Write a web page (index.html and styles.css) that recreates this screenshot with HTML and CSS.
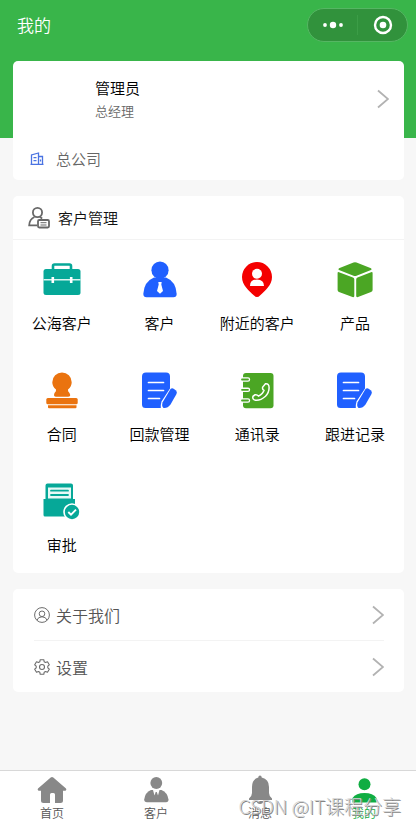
FILE: index.html
```html
<!DOCTYPE html>
<html lang="zh-CN">
<head>
<meta charset="utf-8">
<meta name="viewport" content="width=device-width, initial-scale=1">
<title>我的</title>
<link rel="stylesheet" href="styles.css">
</head>
<body>
<svg class="defs" aria-hidden="true">
  <symbol id="chevron" viewBox="0 0 12 20"><path d="M1 1.500L11 10L1 18.500" fill="none" stroke="#b2b2b2" stroke-width="1.800"/></symbol>
  <symbol id="note" viewBox="0 0 40 40">
    <path d="M6 1.500H26Q30 1.500 30 5.500V17.500L21.500 30.500Q20.500 34 20.800 37H5.500Q2 37 2 33.500V5.500Q2 1.500 6 1.500Z" fill="#2060ff"/>
    <path d="M8.500 11.500H23.500M8.500 19.500H23.500M8.500 27.500H19.500" stroke="#fff" stroke-width="1.700" stroke-linecap="round"/>
    <path d="M30.500 18Q32 16.500 34 18L36 19.500Q37.500 21 36.500 23L30.500 33.500Q27.500 37.500 23.500 37Q21.500 35.500 22.500 31.500Z" fill="#2060ff"/>
  </symbol>
</svg>
<div class="page">
  <header class="topbar">
    <h1>我的</h1>
    <div class="capsule">
      <button type="button" aria-label="更多"><svg width="22" height="8" viewBox="0 0 22 8" fill="#fff"><circle cx="3" cy="4" r="1.900"/><circle cx="11" cy="4" r="3.200"/><circle cx="19" cy="4" r="1.900"/></svg></button>
      <button type="button" aria-label="关闭"><svg width="20" height="20" viewBox="0 0 20 20"><circle cx="10" cy="10" r="8" fill="none" stroke="#fff" stroke-width="2.400"/><circle cx="10" cy="10" r="3.300" fill="#fff"/></svg></button>
    </div>
  </header>

  <main>
    <section class="card profile">
      <a href="#profile" class="person">
        <span class="who"><strong>管理员</strong><small>总经理</small></span>
        <svg class="chevron"><use href="#chevron"/></svg>
      </a>
      <p class="company">
        <svg width="14" height="14" viewBox="0 0 14 14" fill="none" stroke="#4a73e2" stroke-width="1.300"><path d="M1.500 12V3L8.500 1V12M8.500 4.500H12.500V12M0.500 12.300H13.500M3.500 5.700H6.500M3.500 8.700H6.500M10.500 7.500V9.500"/></svg>
        <span>总公司</span>
      </p>
    </section>

    <section class="card">
      <h2>
        <svg width="22" height="22" viewBox="0 0 22 22" fill="none" stroke="#686868" stroke-width="1.800"><circle cx="9.500" cy="5.500" r="4.600"/><path d="M6.500 10Q1.500 12 1.200 18.300H9M12 10L14.200 11.500"/><rect x="10" y="13" width="11" height="7.500" rx="1.200"/><path d="M12.500 15.700H18.500M12.500 18H18.500" stroke-width="1"/></svg>
        客户管理
      </h2>
      <nav class="grid" aria-label="客户管理">
        <a href="#sea"><svg viewBox="0 0 40 40"><path d="M11 10V6Q11 4.500 12.500 4.500H27.500Q29 4.500 29 6V10" fill="none" stroke="#06a898" stroke-width="2.600"/><rect x="1.500" y="9" width="37" height="26" rx="2.500" fill="#06a898"/><path d="M1.500 19.700H38.500" stroke="#d9f5f0" stroke-width="1.400"/><path d="M10.800 17V23M29.200 17V23" stroke="#fff" stroke-width="2.600"/></svg>公海客户</a>
        <a href="#customers"><svg viewBox="0 0 40 40" fill="#2060ff"><circle cx="20" cy="10.200" r="8.600"/><path d="M14 17.500H26Q36 21.500 36.700 34Q36.500 37.200 33.500 37.200H6.500Q3.500 37.200 3.300 34Q4 21.500 14 17.500Z"/><path d="M18.300 22H21.700L21.300 24.500L23 31L20 33.800L17 31L18.700 24.500Z" fill="#fff"/></svg>客户</a>
        <a href="#nearby"><svg viewBox="0 0 40 40"><path d="M20 2A15 15 0 0 0 5 17C5 25 12 31 17 35.500Q20 38.500 23 35.500C28 31 35 25 35 17A15 15 0 0 0 20 2Z" fill="#f40000"/><circle cx="20" cy="13.800" r="5" fill="#fff"/><path d="M13 26Q13 19.500 20 19.500Q27 19.500 27 26Z" fill="#fff"/></svg>附近的客户</a>
        <a href="#products"><svg viewBox="0 0 40 40" fill="#4ba624"><path d="M4 8.300L18.500 2.500Q20 1.800 21.500 2.500L36 8.300Q37.300 9.200 36 10L21.500 15.700Q20 16.200 18.500 15.700L4 10Q2.700 9.200 4 8.300Z"/><path d="M4 12.200L18 17.500Q19.300 18 19.300 19.500V36Q19.300 37.600 17.500 37L4 32Q2.600 31.300 2.600 30V13Q2.600 11.600 4 12.200ZM36 12.200L22.500 17.500Q21.200 18 21.200 19.500V36Q21.200 37.600 23 37L36 32Q37.600 31.300 37.600 30V13Q37.600 11.600 36 12.200Z"/></svg>产品</a>
        <a href="#contracts"><svg viewBox="0 0 40 40" fill="#ea730f"><path d="M20 1.500A9.700 9.700 0 0 0 10.300 11.200Q10.300 15.500 14 18.500Q14.500 20 12.500 22Q11 25.800 14 25.800H26Q29.500 25.800 27.500 22Q25.500 20 26 18.500Q29.700 15.500 29.700 11.200A9.700 9.700 0 0 0 20 1.500Z"/><rect x="4.300" y="27" width="31.400" height="6.200" rx="1.500"/><path d="M6 34.200H34.500V36.200Q34.500 37.200 33.500 37.200H7Q6 37.200 6 36.200Z"/></svg>合同</a>
        <a href="#payments"><svg><use href="#note"/></svg>回款管理</a>
        <a href="#contacts"><svg viewBox="0 0 40 40" fill="none" stroke-linecap="round"><rect x="6" y="2" width="30.500" height="35.200" rx="3" fill="#4ba624"/><path d="M5.500 8.500H11M5.500 18.800H11M5.500 29.500H11" stroke="#fff" stroke-width="4.400"/><path d="M5 8.500H11M5 18.800H11M5 29.500H11" stroke="#4ba624" stroke-width="1.800"/><path d="M28.500 12.800Q32 12.300 32.100 16.800Q32 21.800 28.500 25.300Q23.500 29.800 18.500 29.300Q15 28.300 16 25.300L18 23.800Q20 23.300 21.500 25.100Q26 22.800 27 19.300Q25 18.300 25.700 16Z" stroke="#fff" stroke-width="1.500"/></svg>通讯录</a>
        <a href="#followups"><svg><use href="#note"/></svg>跟进记录</a>
        <a href="#approvals"><svg viewBox="0 0 40 40"><path d="M3.500 17V3.500Q3.500 1.500 5.500 1.500H29Q31 1.500 31 3.500V17H33V34.500H3Q1.500 34.500 1.500 33V17Z" fill="#06a898"/><rect x="6" y="5.500" width="23" height="11" fill="#e6f9f6"/><path d="M9 8.700H26M9 13H26" stroke="#06a898" stroke-width="1.800" stroke-linecap="round"/><circle cx="30" cy="30" r="8.800" fill="#fff"/><circle cx="30" cy="30" r="7.200" fill="#06a898"/><path d="M26.300 30L29 32.700L34 27.700" fill="none" stroke="#fff" stroke-width="1.900"/></svg>审批</a>
      </nav>
    </section>

    <nav class="card list" aria-label="其他">
      <a href="#about">
        <svg width="16" height="16" viewBox="0 0 16 16" fill="none" stroke="#6c6c6c"><circle cx="8" cy="8" r="7.400"/><circle cx="8" cy="6.800" r="2.800"/><path d="M3 13.200Q4 9.800 8 9.800Q12 9.800 13 13.200"/></svg>
        <span>关于我们</span><svg class="chevron"><use href="#chevron"/></svg>
      </a>
      <a href="#settings">
        <svg width="16" height="16" viewBox="0 0 16 16" fill="none" stroke="#6c6c6c" stroke-width="1.100" stroke-linejoin="round"><path d="M6.200 0.700H9.800L10.200 2.800L11.500 3.500L13.500 2.800L15.300 5.800L13.800 7.200V8.800L15.300 10.200L13.500 13.200L11.500 12.500L10.200 13.200L9.800 15.300H6.200L5.800 13.200L4.500 12.500L2.500 13.200L0.700 10.200L2.200 8.800V7.200L0.700 5.800L2.500 2.800L4.500 3.500L5.800 2.800Z"/><circle cx="8" cy="8" r="2.500"/></svg>
        <span>设置</span><svg class="chevron"><use href="#chevron"/></svg>
      </a>
    </nav>
  </main>

  <nav class="tabbar" aria-label="主导航">
    <a href="#home"><svg viewBox="0 0 30 30"><path d="M13.700 2.500Q15 1.500 16.300 2.500L29 13.500Q30 15 28.500 15.700H26V25.500Q26 28 23.500 28H18V19.500Q18 18 16.500 18H14.500Q13 18 13 19.500V28H6.500Q4 28 4 25.500V15.700H1.500Q0 15 1 13.500Z"/></svg>首页</a>
    <a href="#customers"><svg viewBox="0 0 30 30"><circle cx="15.300" cy="8" r="5.900"/><path d="M10 15H20.500Q26.500 17.500 27.500 24.500Q27.500 27.300 25 27.300H6Q3.200 27.300 3.200 24.500Q4 17.500 10 15Z"/><path d="M12 15L13.500 20.500L14.700 17H15.800L17 20.500L18.500 15Z" fill="#fff"/></svg>客户</a>
    <a href="#messages"><svg viewBox="0 0 30 30"><path d="M15 0.500Q16.700 0.500 16.700 2.500Q24 4 24 12V18Q24 21 27 23.500V25H4V23.500Q7 21 7 18V12Q7 4 13.300 2.500Q13.300 0.500 15 0.500ZM11.500 26H18.500Q18 29 15 29Q12 29 11.500 26Z"/></svg>消息</a>
    <a href="#me" class="current" aria-current="page"><svg viewBox="0 0 30 30"><circle cx="15.500" cy="9.300" r="6"/><path d="M3.500 27.500V23Q7 18 15.500 18Q24 18 27.500 23V27.500Z"/></svg>我的</a>
    <span class="watermark">CSDN @IT课程分享</span>
  </nav>
</div>
</body>
</html>
```
FILE: styles.css
```css
* { box-sizing: border-box; }

body {
  margin: 0;
  background: #f7f7f7;
  color: #111;
  font-family: "Noto Sans CJK SC", sans-serif;
  font-size: 15px;
  font-weight: 350;
  line-height: 24px;
}

h1, h2, p { margin: 0; font-weight: inherit; }
a { color: inherit; text-decoration: none; }
svg { display: block; flex: none; }
.defs { position: absolute; width: 0; height: 0; }

.page {
  display: flex;
  flex-direction: column;
  min-height: 100vh;
  background: linear-gradient(#39b54a, #39b54a) top / 100% 138px no-repeat;
}

.topbar {
  display: flex;
  align-items: center;
  justify-content: space-between;
  height: 50px;
  padding: 0 8px 0 17px;
}
.topbar h1 { color: #fff; font-size: 17px; }

.capsule {
  display: flex;
  width: 101px;
  height: 34px;
  padding: 6px 0;
  border: 1px solid #55b663;
  border-radius: 17px;
  background: #31923c;
}
.capsule button {
  display: flex;
  flex: 1;
  align-items: center;
  justify-content: center;
  padding: 0;
  border: 0;
  background: none;
}
.capsule button + button { border-left: 1px solid #3c9d47; }

main {
  display: flex;
  flex: 1;
  flex-direction: column;
  gap: 16px;
  padding: 11px 12px 16px 13px;
}
.card { border-radius: 5px; background: #fff; }

.chevron { width: 12px; height: 20px; }

.profile { padding: 15px 15px 9px 16px; }
.person { display: flex; align-items: center; justify-content: space-between; }
.who { display: flex; flex-direction: column; padding-left: 66px; }
.who strong { color: #000; font-weight: inherit; }
.who small { color: #666; font-size: 13px; line-height: 22px; }
.company {
  display: flex;
  align-items: center;
  gap: 12px;
  margin-top: 25px;
  padding-left: 1px;
  color: #666;
}

h2 {
  display: flex;
  align-items: center;
  gap: 8px;
  height: 44px;
  padding: 0 15px;
  border-bottom: 1px solid #f3f3f3;
  font-size: 15px;
}

.grid { display: grid; grid-template-columns: repeat(4, 1fr); }
.grid a {
  display: flex;
  flex-direction: column;
  align-items: center;
  gap: 11px;
  padding: 20px 0 16px;
  color: #000;
}
.grid svg { width: 40px; height: 40px; }

.list { padding: 0 20px 0 21px; color: #555; font-size: 16px; }
.list a { display: flex; align-items: center; gap: 6px; height: 51px; }
.list a + a { height: 52px; border-top: 1px solid #f3f3f3; }
.list span { flex: 1; }

.tabbar {
  position: relative;
  display: grid;
  grid-template-columns: repeat(4, 1fr);
  border-top: 1px solid #d8d8d8;
  background: #fff;
  color: #555;
  font-size: 12px;
  line-height: 16px;
}
.tabbar a {
  display: flex;
  flex-direction: column;
  align-items: center;
  padding: 4px 0;
}
.tabbar a svg { width: 30px; height: 30px; fill: #888; }
.tabbar .current { color: #10ad42; }
.tabbar .current svg { fill: #10ad42; }

.watermark {
  position: absolute;
  right: 15px;
  bottom: 6px;
  color: #d4d4d4;
  font-size: 19px;
  font-weight: 300;
  line-height: 26px;
  text-shadow: 1px 1px 0 #858585;
  white-space: nowrap;
  pointer-events: none;
}
```
